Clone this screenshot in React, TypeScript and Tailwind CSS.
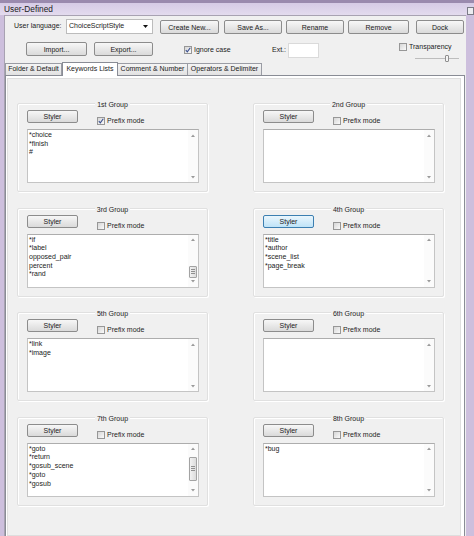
import React from "react";

function Btn({
  label,
  className,
  focused,
}: {
  label: string;
  className: string;
  focused?: boolean;
}) {
  return (
    <div
      className={`flex shrink-0 items-center justify-center rounded-[2px] border text-[7px] leading-none text-[#1a1a1a] ${
        focused
          ? "border-[#3c7fb1] bg-linear-to-b from-[#eaf6fd] to-[#bfe3f7]"
          : "border-[#8c8c8c] bg-linear-to-b from-[#f7f7f7] to-[#dadada]"
      } ${className}`}
    >
      {label}
    </div>
  );
}

function Check({ checked }: { checked?: boolean }) {
  return (
    <div className="flex h-[8px] w-[8px] shrink-0 items-center justify-center border border-[#979797] bg-linear-to-br from-[#d6d6d6] to-[#fafafa]">
      {checked && (
        <svg width="6" height="6" viewBox="0 0 6 6">
          <path d="M0.8 3.2 L2.3 4.9 L5.3 0.8" fill="none" stroke="#3a4f8f" strokeWidth="1.1" />
        </svg>
      )}
    </div>
  );
}

function ArrowUp() {
  return (
    <svg width="4" height="3" viewBox="0 0 4 3">
      <path d="M0 3 L2 0.5 L4 3 Z" fill="#9a9a9a" />
    </svg>
  );
}
function ArrowDown() {
  return (
    <svg width="4" height="3" viewBox="0 0 4 3">
      <path d="M0 0 L2 2.5 L4 0 Z" fill="#9a9a9a" />
    </svg>
  );
}

function ListBox({ lines, thumb }: { lines: string[]; thumb?: [number, number] }) {
  return (
    <div className="ml-[9px] mt-[4px] flex h-[54px] w-[172px] border border-[#c4c4c4] border-t-[#adadad] bg-white">
      <div className="flex-1 pl-[1px] pt-[1px] text-[7px] leading-[8.7px] text-[#222222]">
        {lines.map((l, i) => (
          <div key={i}>{l}</div>
        ))}
      </div>
      <div className="flex w-[10px] flex-col items-center bg-[#fbfbfb]">
        <div className="flex h-[10px] items-center justify-center">
          <ArrowUp />
        </div>
        <div className="relative w-full flex-1">
          {thumb && (
            <div
              className="absolute left-[1px] flex w-[8px] flex-col items-center justify-center gap-[1px] rounded-[1px] border border-[#a3a3a3] bg-linear-to-r from-[#f2f2f2] to-[#dcdcdc]"
              style={{ top: thumb[0], height: thumb[1] }}
            >
              <div className="h-px w-[4px] bg-[#909090]" />
              <div className="h-px w-[4px] bg-[#909090]" />
              <div className="h-px w-[4px] bg-[#909090]" />
            </div>
          )}
        </div>
        <div className="flex h-[10px] items-center justify-center">
          <ArrowDown />
        </div>
      </div>
    </div>
  );
}

type G = {
  title: string;
  lines: string[];
  checked?: boolean;
  focused?: boolean;
  thumb?: [number, number];
};

function Group({ g }: { g: G }) {
  return (
    <div className="h-[89px] rounded-[2px] border border-[#e0e0e0] shadow-[inset_1px_1px_0_#ffffff,1px_1px_0_#ffffff]">
      <div className="-mt-[4px] flex h-[9px] justify-center">
        <span className="bg-[#f0f0f0] px-[2px] text-[7px] leading-[9px] text-[#1e1e1e]">{g.title}</span>
      </div>
      <div className="mt-[1px] flex items-start pl-[9px]">
        <Btn label="Styler" focused={g.focused} className="h-[13px] w-[51px]" />
        <div className="ml-[19px] mt-[7px] flex items-center">
          <Check checked={g.checked} />
          <span className="ml-[2px] text-[7px] leading-[8px] text-[#1e1e1e]">Prefix mode</span>
        </div>
      </div>
      <ListBox lines={g.lines} thumb={g.thumb} />
    </div>
  );
}

const groups: G[] = [
  { title: "1st Group", lines: ["*choice", "*finish", "#"], checked: true },
  { title: "2nd Group", lines: [] },
  { title: "3rd Group", lines: ["*if", "*label", "opposed_pair", "percent", "*rand"], thumb: [21, 12] },
  { title: "4th Group", lines: ["*title", "*author", "*scene_list", "*page_break"], focused: true },
  { title: "5th Group", lines: ["*link", "*image"] },
  { title: "6th Group", lines: [] },
  { title: "7th Group", lines: ["*goto", "*return", "*gosub_scene", "*goto", "*gosub"], thumb: [3, 24] },
  { title: "8th Group", lines: ["*bug"] },
];

export default function App() {
  return (
    <div className="flex h-[536px] w-[474px] flex-col overflow-hidden bg-[#cdbfdd] font-['Liberation_Sans',Arial,sans-serif] text-[#1a1a1a]">
      <div className="h-[3px] shrink-0 bg-[#9a8aae]" />
      <div className="flex h-[12px] shrink-0 items-center bg-linear-to-b from-[#d6cbe6] to-[#e3dbee] pl-[4px] text-[8.3px] leading-none text-[#202020]">
        <span className="mt-[1px]">User-Defined</span>
        <div className="ml-auto mt-[3px] h-[8px] w-[7px] border border-[#7a7a86] bg-[#ececf0]" />
      </div>
      <div className="ml-[4px] flex w-[462px] flex-1 flex-col border-l border-t border-[#a8a2b2] bg-[#f0f0f0]">
        {/* Row 1 */}
        <div className="mt-[3px] flex h-[15px] items-end pl-[9px]">
          <div className="flex h-[15px] w-[52px] items-center text-[7px]">User language:</div>
          <div className="flex h-[15px] w-[87px] items-center justify-between border border-[#bcbcbc] bg-white pl-[2px] pr-[4px] text-[7px]">
            <span>ChoiceScriptStyle</span>
            <svg width="5" height="3" viewBox="0 0 5 3">
              <path d="M0 0 L2.5 3 L5 0 Z" fill="#111" />
            </svg>
          </div>
          <Btn label="Create New..." className="ml-[7px] h-[14px] w-[59px]" />
          <Btn label="Save As..." className="ml-[5px] h-[14px] w-[58px]" />
          <Btn label="Rename" className="ml-[4px] h-[14px] w-[58px]" />
          <Btn label="Remove" className="ml-[4px] h-[14px] w-[61px]" />
          <Btn label="Dock" className="ml-[7px] h-[14px] w-[48px]" />
        </div>
        {/* Row 2 */}
        <div className="mt-[8px] flex h-[20px] items-start pl-[21px]">
          <Btn label="Import..." className="h-[14px] w-[61px]" />
          <Btn label="Export..." className="ml-[7px] h-[14px] w-[59px]" />
          <div className="ml-[31px] mt-[4px] flex w-[88px] items-center">
            <Check checked />
            <span className="ml-[2px] text-[7px] leading-[8px]">Ignore case</span>
          </div>
          <div className="mt-[1px] flex h-[15px] w-[16px] items-center text-[7px]">Ext.:</div>
          <div className="mt-[1px] h-[15px] w-[31px] border border-[#dadada] bg-white" />
          <div className="ml-[80px] mt-[1px] flex flex-col">
            <div className="flex items-center">
              <Check />
              <span className="ml-[2px] text-[7px] leading-[8px]">Transparency</span>
            </div>
            <div className="relative ml-[16px] mt-[4px] h-[7px] w-[44px]">
              <div className="mt-[3px] h-px w-full bg-[#bdbdbd]" />
              <div className="absolute left-[30px] top-0 h-[7px] w-[4px] rounded-[1px] border border-[#8f8f8f] bg-[#f4f4f4]" />
            </div>
          </div>
        </div>
        {/* Tabs */}
        <div className="flex h-[13px] items-end text-[7px]">
          <div className="flex h-[12px] w-[57px] items-center justify-center border border-b-0 border-[#9a9ca4] bg-linear-to-b from-[#f4f4f4] to-[#e2e2e2]">
            Folder &amp; Default
          </div>
          <div className="relative z-10 -mb-px flex h-[14px] w-[56px] items-center justify-center border border-b-0 border-[#898c95] bg-white">
            Keywords Lists
          </div>
          <div className="flex h-[12px] w-[70px] items-center justify-center border border-b-0 border-l-0 border-[#9a9ca4] bg-linear-to-b from-[#f4f4f4] to-[#e2e2e2]">
            Comment &amp; Number
          </div>
          <div className="flex h-[12px] w-[74px] items-center justify-center border border-b-0 border-l-0 border-[#9a9ca4] bg-linear-to-b from-[#f4f4f4] to-[#e2e2e2]">
            Operators &amp; Delimiter
          </div>
        </div>
        {/* Panel */}
        <div className="flex w-[460px] flex-1 flex-col border border-[#898c95] bg-white pl-[1px] pt-[2px]">
          <div className="h-[458px] w-[454px] border border-[#dedede] bg-[#f0f0f0] pl-[9px] pt-[24px]">
            <div className="grid grid-cols-[191px_191px] gap-x-[45px] gap-y-[15.6px]">
              {groups.map((g) => (
                <Group key={g.title} g={g} />
              ))}
            </div>
          </div>
        </div>
      </div>
    </div>
  );
}
